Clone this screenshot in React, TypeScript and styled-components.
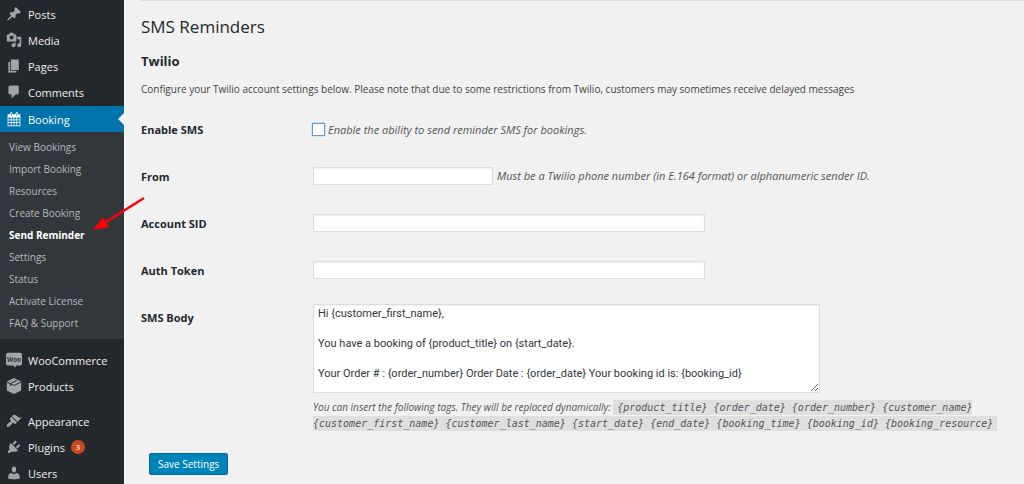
import React from 'react';
import styled, { createGlobalStyle, css } from 'styled-components';

const GlobalStyle = createGlobalStyle`
  *, *::before, *::after { box-sizing: border-box; }
  body {
    margin: 0;
    background: #f1f1f1;
    color: #444;
    font-family: 'Open Sans', 'Noto Sans', sans-serif;
    font-size: 11px;
    line-height: 15px;
  }
`;

const Shell = styled.div`
  position: relative;
  display: flex;
  height: 100vh;
  overflow: hidden;
`;

const Sidebar = styled.nav`
  flex: 0 0 124px;
  padding-top: 1px;
  background: #23282d;
  box-shadow: 1px 0 0 #fafafa;
`;

const MenuList = styled.ul`
  margin: 0;
  padding: 0;
  list-style: none;
`;

const MenuItem = styled.li<{ $gap?: number }>`
  margin-top: ${(p) => p.$gap ?? 0}px;
`;

const MenuLink = styled.a<{ $current?: boolean }>`
  position: relative;
  display: flex;
  align-items: center;
  gap: 6px;
  height: 26px;
  padding-left: 6px;
  color: #eee;
  font-size: 11px;
  text-decoration: none;
  svg { flex: none; fill: #a0a5aa; }
  ${(p) =>
    p.$current &&
    css`
      background: #0073aa;
      color: #fff;
      svg { fill: #fff; }
      &::after {
        content: '';
        position: absolute;
        right: 0;
        top: 7px;
        border: 6px solid transparent;
        border-left-width: 0;
        border-right-color: #f1f1f1;
      }
    `}
`;

const Count = styled.span`
  min-width: 14px;
  height: 14px;
  border-radius: 7px;
  background: #ca4a1f;
  color: #fff;
  font-size: 8px;
  line-height: 14px;
  text-align: center;
`;

const Submenu = styled.ul`
  margin: 0;
  padding: 4px 0 5px;
  background: #32373c;
  list-style: none;
`;

const SubLink = styled.a<{ $current?: boolean }>`
  display: block;
  padding-left: 9px;
  color: ${(p) => (p.$current ? '#fff' : '#b4b9be')};
  font-size: 10px;
  font-weight: ${(p) => (p.$current ? 700 : 400)};
  line-height: 22px;
  text-decoration: none;
`;

const Content = styled.main`
  flex: 1;
  min-width: 0;
  padding-left: 16px;
`;

const Divider = styled.hr`
  height: 1px;
  margin: 0;
  border: 0;
  background: #ddd;
`;

const Panel = styled.div`
  padding: 0 16px 0 1px;
`;

const Title = styled.h1`
  margin: 14px 0 0;
  color: #23282d;
  font-size: 17px;
  font-weight: 400;
  line-height: 24px;
`;

const Section = styled.h2`
  margin: 13px 0 0;
  color: #23282d;
  font-size: 13px;
  line-height: 18px;
`;

const Intro = styled.p`
  margin: 12px 0 0;
  font-size: 10px;
`;

const Form = styled.form`
  margin-top: 9px;
`;

const FormRow = styled.div<{ $tall?: boolean }>`
  display: grid;
  grid-template-columns: 172px minmax(0, 1fr);
  align-items: ${(p) => (p.$tall ? 'start' : 'center')};
  min-height: 47px;
  padding-top: ${(p) => (p.$tall ? 10 : 0)}px;
`;

const RowLabel = styled.label<{ $tall?: boolean }>`
  padding-top: ${(p) => (p.$tall ? 6 : 0)}px;
  color: #23282d;
  font-size: 11px;
  font-weight: 700;
`;

const Field = styled.div<{ $choice?: boolean }>`
  display: flex;
  align-items: center;
  gap: 4px;
  padding-bottom: ${(p) => (p.$choice ? 0 : 2)}px;
`;

const Hint = styled.span`
  color: #555;
  font-size: 11px;
  font-style: italic;
`;

const TextInput = styled.input<{ $short?: boolean }>`
  width: ${(p) => (p.$short ? 180 : 392)}px;
  max-width: 100%;
  height: 18px;
  padding: 0 4px;
  border: 1px solid #ddd;
  background: #fff;
  box-shadow: inset 0 1px 2px rgba(0, 0, 0, 0.07);
  font: inherit;
  outline: none;
`;

const Checkbox = styled.input`
  appearance: none;
  width: 13px;
  height: 13px;
  margin: 0 -1px;
  border: 1px solid #5b9dd9;
  background: #fff;
  box-shadow: 0 0 1px rgba(30, 140, 190, 0.8);
`;

const TextArea = styled.textarea`
  display: block;
  width: 507px;
  max-width: 100%;
  height: 89px;
  padding: 1px 4px;
  border: 1px solid #ddd;
  background: #fff;
  box-shadow: inset 0 1px 2px rgba(0, 0, 0, 0.07);
  color: #32373c;
  font-family: Roboto, 'Open Sans', sans-serif;
  font-size: 11px;
  line-height: 15px;
  overflow: hidden;
  outline: none;
`;

const TagHelp = styled.p`
  margin: 6px 0 0;
  color: #555;
  font-size: 10px;
  font-style: italic;
  line-height: 16px;
`;

const Tags = styled.code`
  padding: 2px 4px;
  background: #dfdfdf;
  font-family: 'DejaVu Sans Mono', 'Liberation Mono', monospace;
  font-size: 10px;
  line-height: 12px;
`;

const SaveButton = styled.button`
  display: block;
  height: 22px;
  margin: 22px 0 0 8px;
  padding: 0 8px;
  border: 1px solid #006799;
  border-radius: 2px;
  background: #0085ba;
  color: #fff;
  font: inherit;
  font-size: 10px;
`;

const Pointer = styled.svg`
  position: absolute;
  left: 92px;
  top: 194px;
  pointer-events: none;
`;

const icons: Record<string, React.ReactNode> = {
  pin: (
    <path d="M10.44 3.02l1.82-1.82 6.36 6.35-1.83 1.82c-1.05-.68-2.48-.57-3.41.36l-.75.75c-.92.93-1.04 2.35-.35 3.41l-1.83 1.82-2.41-2.41-2.8 2.79c-.42.42-3.38 2.71-3.8 2.29s1.86-3.39 2.28-3.81l2.79-2.79L4.1 9.36l1.83-1.82c1.05.69 2.48.57 3.4-.36l.75-.75c.93-.92 1.05-2.35.36-3.41z" />
  ),
  media: (
    <path d="M13 11V4c0-.55-.45-1-1-1h-1.67L9 1H5L3.67 3H2c-.55 0-1 .45-1 1v7c0 .55.45 1 1 1h10c.55 0 1-.45 1-1zM7 4.5c1.38 0 2.5 1.12 2.5 2.5S8.38 9.5 7 9.5 4.5 8.38 4.5 7 5.62 4.5 7 4.5zM14 6h5v10.5c0 1.38-1.12 2.5-2.5 2.5S14 17.88 14 16.5s1.12-2.5 2.5-2.5c.17 0 .34.02.5.05V9h-3V6zm-4 8.05V13h2v3.5c0 1.38-1.12 2.5-2.5 2.5S7 17.88 7 16.5 8.12 14 9.5 14c.17 0 .34.02.5.05z" fillRule="evenodd" />
  ),
  page: <path d="M6 15V2h10v13H6zm-1 1h8v2H3V5h2v11z" />,
  comment: (
    <path d="M5 2h9c1.1 0 2 .9 2 2v7c0 1.1-.9 2-2 2h-2l-5 5v-5H5c-1.1 0-2-.9-2-2V4c0-1.1.9-2 2-2z" />
  ),
  calendar: (
    <path
      fillRule="evenodd"
      d="M5 4V3a1.500 1.500 0 0 1 3 0v1h4V3a1.500 1.500 0 0 1 3 0v1h3v15H2V4zM6 3v2.500a.5.5 0 0 0 1 0V3a.5.5 0 0 0-1 0zM13 3v2.500a.5.5 0 0 0 1 0V3a.5.5 0 0 0-1 0zM3 8h3v2.500H3zM7 8h2.500v2.500H7zM10.500 8H13v2.500h-2.500zM14 8h3v2.500h-3zM3 11.500h3V14H3zM7 11.500h2.500V14H7zM10.500 11.500H13V14h-2.500zM14 11.500h3V14h-3zM3 15h3v3H3zM7 15h2.500v3H7zM10.500 15H13v3h-2.500zM14 15h3v3h-3z"
    />
  ),
  woo: (
    <>
      <path d="M2.500 1h15A2.500 2.500 0 0 1 20 3.500v11a2.500 2.500 0 0 1-2.500 2.500H12.500l-.5 2.500L9 17H2.500A2.500 2.500 0 0 1 0 14.500v-11A2.500 2.500 0 0 1 2.500 1z" />
      <text x="10" y="12" textAnchor="middle" fontSize="8" fontWeight="700" style={{ fill: '#32373c' }}>
        Woo
      </text>
    </>
  ),
  box: (
    <>
      <path d="M10 0L19 4.300V15.500L10 20L1 15.500V4.300z" />
      <path d="M1 5L10 9.300L19 5M5.500 7L14 2.500M5.500 7V10" fill="none" stroke="#23282d" strokeWidth="1.200" />
    </>
  ),
  brush: (
    <path d="M14.48 11.06L7.41 3.99l1.5-1.5c.5-.56 2.3-.47 3.51.32 1.21.8 1.43 1.28 2.91 2.1 1.18.64 2.45 1.26 4.45.85zm-.71.71L6.7 4.7 4.93 6.47c-.39.39-.39 1.02 0 1.41l1.06 1.06c.39.39.39 1.03 0 1.42-.6.6-1.43 1.11-2.21 1.69-.35.26-.7.53-1.01.84C1.43 14.23.4 16.08 1.4 17.07c.99 1 2.84-.03 4.18-1.36.31-.31.58-.66.85-1.02.57-.78 1.08-1.61 1.69-2.21.39-.39 1.02-.39 1.41 0l1.06 1.06c.39.39 1.02.39 1.41 0z" />
  ),
  plug: (
    <path d="M13.11 4.36L9.87 7.6 8 5.73l3.24-3.24c.35-.34 1.05-.2 1.56.32.52.51.66 1.21.31 1.55zm-8 1.77l.91-1.12 9.01 9.01-1.19.84c-.71.71-2.63 1.16-3.82 1.16H6.14L4.9 17.26c-.59.59-1.54.59-2.12 0-.59-.58-.59-1.53 0-2.12l1.24-1.24v-3.88c0-1.13.4-3.19 1.09-3.89zm7.26 3.97l3.24-3.24c.34-.35 1.04-.21 1.55.31.52.51.66 1.21.31 1.55l-3.24 3.25z" />
  ),
  user: (
    <path d="M10 9.25c-2.27 0-2.73-3.44-2.73-3.44C7 4.02 7.82 2 9.97 2c2.16 0 2.98 2.02 2.71 3.81 0 0-.41 3.44-2.68 3.44zm0 2.57L12.72 10c2.39 0 4.52 2.33 4.52 4.53v2.49s-3.65 1.13-7.24 1.13c-3.65 0-7.24-1.13-7.24-1.13v-2.49c0-2.25 1.94-4.48 4.47-4.48z" />
  ),
};

type Entry = { label: string; icon: string; gap?: number; count?: number; children?: string[] };

const menu: Entry[] = [
  { label: 'Posts', icon: 'pin' },
  { label: 'Media', icon: 'media' },
  { label: 'Pages', icon: 'page' },
  { label: 'Comments', icon: 'comment' },
  {
    label: 'Booking',
    icon: 'calendar',
    gap: 1,
    children: [
      'View Bookings',
      'Import Booking',
      'Resources',
      'Create Booking',
      'Send Reminder',
      'Settings',
      'Status',
      'Activate License',
      'FAQ & Support',
    ],
  },
  { label: 'WooCommerce', icon: 'woo', gap: 8 },
  { label: 'Products', icon: 'box' },
  { label: 'Appearance', icon: 'brush', gap: 9 },
  { label: 'Plugins', icon: 'plug', count: 3 },
  { label: 'Users', icon: 'user' },
];

const bodyText = `Hi {customer_first_name},

You have a booking of {product_title} on {start_date}.

Your Order # : {order_number} Order Date : {order_date} Your booking id is: {booking_id}`;

const tags =
  '{product_title} {order_date} {order_number} {customer_name} {customer_first_name} {customer_last_name} {start_date} {end_date} {booking_time} {booking_id} {booking_resource}';

export default function App() {
  return (
    <Shell>
      <GlobalStyle />
      <Sidebar aria-label="Main menu">
        <MenuList>
          {menu.map((m) => (
            <MenuItem key={m.label} $gap={m.gap}>
              <MenuLink href="#" $current={!!m.children}>
                <svg width="16" height="16" viewBox="0 0 20 20" aria-hidden="true">
                  {icons[m.icon]}
                </svg>
                {m.label}
                {m.count && <Count>{m.count}</Count>}
              </MenuLink>
              {m.children && (
                <Submenu>
                  {m.children.map((c) => (
                    <li key={c}>
                      <SubLink href="#" $current={c === 'Send Reminder'}>
                        {c}
                      </SubLink>
                    </li>
                  ))}
                </Submenu>
              )}
            </MenuItem>
          ))}
        </MenuList>
      </Sidebar>
      <Content>
        <Divider />
        <Panel>
          <Title>SMS Reminders</Title>
          <Section>Twilio</Section>
          <Intro>
            Configure your Twilio account settings below. Please note that due to some restrictions from Twilio,
            customers may sometimes receive delayed messages
          </Intro>
          <Form onSubmit={(e) => e.preventDefault()}>
            <FormRow>
              <RowLabel htmlFor="enable">Enable SMS</RowLabel>
              <Field $choice>
                <Checkbox id="enable" type="checkbox" />
                <Hint>Enable the ability to send reminder SMS for bookings.</Hint>
              </Field>
            </FormRow>
            <FormRow>
              <RowLabel htmlFor="from">From</RowLabel>
              <Field>
                <TextInput id="from" type="text" $short />
                <Hint>Must be a Twilio phone number (in E.164 format) or alphanumeric sender ID.</Hint>
              </Field>
            </FormRow>
            <FormRow>
              <RowLabel htmlFor="sid">Account SID</RowLabel>
              <Field>
                <TextInput id="sid" type="text" />
              </Field>
            </FormRow>
            <FormRow>
              <RowLabel htmlFor="token">Auth Token</RowLabel>
              <Field>
                <TextInput id="token" type="text" />
              </Field>
            </FormRow>
            <FormRow $tall>
              <RowLabel htmlFor="body" $tall>
                SMS Body
              </RowLabel>
              <div>
                <TextArea id="body" defaultValue={bodyText} />
                <TagHelp>
                  You can insert the following tags. They will be replaced dynamically: <Tags>{tags}</Tags>
                </TagHelp>
              </div>
            </FormRow>
            <SaveButton type="submit">Save Settings</SaveButton>
          </Form>
        </Panel>
      </Content>
      <Pointer width="54" height="38" viewBox="0 0 54 38" aria-hidden="true">
        <path d="M52 4L14 28" stroke="#f00" strokeWidth="2.500" fill="none" />
        <path d="M1 36L11 23L17 33z" fill="#f00" />
      </Pointer>
    </Shell>
  );
}
